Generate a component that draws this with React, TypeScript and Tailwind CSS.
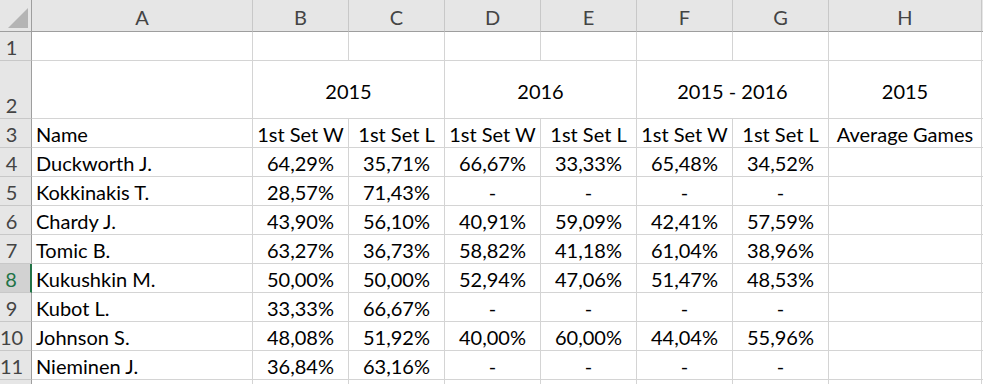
import React from 'react';

type Row = { n: number; name: string; vals: string[] };

const COLS = ['A', 'B', 'C', 'D', 'E', 'F', 'G', 'H'];

const DATA: Row[] = [
  { n: 4, name: 'Duckworth J.', vals: ['64,29%', '35,71%', '66,67%', '33,33%', '65,48%', '34,52%'] },
  { n: 5, name: 'Kokkinakis T.', vals: ['28,57%', '71,43%', '-', '-', '-', '-'] },
  { n: 6, name: 'Chardy J.', vals: ['43,90%', '56,10%', '40,91%', '59,09%', '42,41%', '57,59%'] },
  { n: 7, name: 'Tomic B.', vals: ['63,27%', '36,73%', '58,82%', '41,18%', '61,04%', '38,96%'] },
  { n: 8, name: 'Kukushkin M.', vals: ['50,00%', '50,00%', '52,94%', '47,06%', '51,47%', '48,53%'] },
  { n: 9, name: 'Kubot L.', vals: ['33,33%', '66,67%', '-', '-', '-', '-'] },
  { n: 10, name: 'Johnson S.', vals: ['48,08%', '51,92%', '40,00%', '60,00%', '44,04%', '55,96%'] },
  { n: 11, name: 'Nieminen J.', vals: ['36,84%', '63,16%', '-', '-', '-', '-'] },
];

const cell = 'border-r border-b border-[#d4d4d4] flex items-center whitespace-nowrap overflow-hidden';

function RowHead({ n, active, bottom }: { n?: number; active?: boolean; bottom?: boolean }) {
  return (
    <div
      className={
        'flex justify-center pr-[8px] border-b border-[#c8c8c8] ' +
        (bottom ? 'items-end pb-[3px] ' : 'items-center pt-[2px] ') +
        (active
          ? 'bg-[#d2d2d2] text-[#217346] border-r-2 border-r-[#217346]'
          : 'bg-[#e6e6e6] text-[#444] border-r border-r-[#9e9e9e]')
      }
    >
      {n}
    </div>
  );
}

export default function App() {
  return (
    <div
      className="w-[983px] h-[384px] overflow-hidden bg-white text-black text-[20px] leading-none"
      style={{ fontFamily: 'Lato, "Liberation Sans", sans-serif' }}
    >
      <div className="grid grid-cols-[32px_221px_96px_96px_96px_96px_96px_96px_153px_40px] grid-rows-[32px_29px_58px_repeat(10,29px)]">
        {/* column headers */}
        <div className="bg-[#e6e6e6] border-r border-b border-[#9e9e9e] relative">
          <div className="absolute left-[8px] top-[8px] w-0 h-0 border-l-[20px] border-l-transparent border-b-[20px] border-b-[#b4b4b4]" />
        </div>
        {COLS.map(c => (
          <div
            key={c}
            className="bg-[#e6e6e6] border-r border-r-[#c8c8c8] border-b border-b-[#9e9e9e] flex items-center justify-center pt-[2px] text-[#444]"
          >
            {c}
          </div>
        ))}
        <div className="bg-[#e6e6e6] border-b border-b-[#9e9e9e]" />

        {/* row 1 */}
        <RowHead n={1} />
        {COLS.map(c => (
          <div key={c} className={cell} />
        ))}
        <div className={cell} />

        {/* row 2 - merged year headers */}
        <RowHead n={2} bottom />
        <div className={cell} />
        <div className={cell + ' col-span-2 justify-center pt-[2px]'}>2015</div>
        <div className={cell + ' col-span-2 justify-center pt-[2px]'}>2016</div>
        <div className={cell + ' col-span-2 justify-center pt-[2px]'}>2015 - 2016</div>
        <div className={cell + ' justify-center pt-[2px]'}>2015</div>
        <div className={cell} />

        {/* row 3 - labels */}
        <RowHead n={3} />
        <div className={cell + ' pl-[4px] pt-[2px]'}>Name</div>
        {['1st Set W', '1st Set L', '1st Set W', '1st Set L', '1st Set W', '1st Set L'].map((t, i) => (
          <div key={i} className={cell + ' justify-center pt-[2px]'}>
            {t}
          </div>
        ))}
        <div className={cell + ' justify-center pt-[2px]'}>Average Games</div>
        <div className={cell} />

        {/* data rows */}
        {DATA.map(r => (
          <React.Fragment key={r.n}>
            <RowHead n={r.n} active={r.n === 8} />
            <div className={cell + ' pl-[4px] pt-[2px]'}>{r.name}</div>
            {r.vals.map((v, i) => (
              <div key={i} className={cell + ' justify-center pt-[2px]'}>
                {v}
              </div>
            ))}
            <div className={cell} />
            <div className={cell} />
          </React.Fragment>
        ))}

        {/* row 12, cut off at the bottom edge */}
        <RowHead />
        {COLS.map(c => (
          <div key={c} className={cell} />
        ))}
        <div className={cell} />
      </div>
    </div>
  );
}
